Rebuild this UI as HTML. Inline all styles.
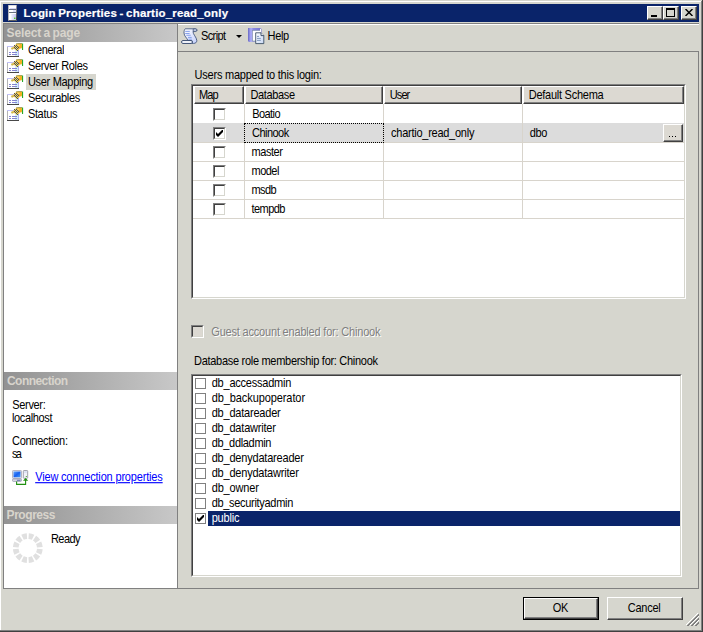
<!DOCTYPE html>
<html><head><meta charset="utf-8"><title>Login Properties - chartio_read_only</title>
<style>
html,body{margin:0;padding:0;background:#d6d6ce;}
body{width:703px;height:632px;overflow:hidden;}
#win{position:relative;width:703px;height:632px;background:#d6d6ce;overflow:hidden;font:11px/13px "Liberation Sans",sans-serif;color:#000;}
#win div,#win span,#win svg{position:absolute;box-sizing:border-box;}
.t{white-space:nowrap;font-size:11px;line-height:13px;transform:scaleY(1.125);transform-origin:0 10px;}
.b{font-weight:bold;font-size:11.5px;word-spacing:-0.8px;transform:none;-webkit-text-stroke:0.2px currentColor;}
.b2{font-size:12px;transform:none;-webkit-text-stroke:0;}
.dis{color:#808080;text-shadow:1px 1px 0 #fff;}
.lnk{color:#0000ff;text-decoration:underline;}
.hdr{left:4px;width:173px;height:18px;background:linear-gradient(90deg,#929292,#c8c8c8);}
.hc{top:86px;height:18px;background:#dcd9d2;border-top:1px solid #fff;border-left:1px solid #fff;border-right:1px solid #404040;border-bottom:1px solid #404040;}
.hc i{position:absolute;left:0;top:0;right:0;bottom:0;border-right:1px solid #808080;border-bottom:1px solid #808080;}
.cb{width:13px;height:13px;background:#fff;border-top:1px solid #808080;border-left:1px solid #808080;border-right:1px solid #fff;border-bottom:1px solid #fff;}
.cb i{position:absolute;left:0;top:0;right:0;bottom:0;border-top:1px solid #404040;border-left:1px solid #404040;border-right:1px solid #d6d6ce;border-bottom:1px solid #d6d6ce;}
.fb{width:11px;height:11px;background:#fff;border:1px solid #808080;left:195px;}
.hl{background:#d6d6ce;}
.gl{background:#d8d4cc;}
.btn{background:#d6d6ce;border-top:1px solid #fff;border-left:1px solid #fff;border-right:1px solid #404040;border-bottom:1px solid #404040;}
.btn i{position:absolute;left:0;top:0;right:0;bottom:0;border-right:1px solid #808080;border-bottom:1px solid #808080;}
.pi{left:7px;width:16px;height:15px;}

</style></head>
<body>
<div id="win">
<!-- window frame -->
<div style="left:0;top:1px;width:701px;height:1px;background:#fff"></div>
<div style="left:0;top:1px;width:1px;height:629px;background:#fff"></div>
<div style="left:701px;top:1px;width:1px;height:630px;background:#808080"></div>
<div style="left:0;top:630px;width:702px;height:1px;background:#808080"></div>
<div style="left:702px;top:0;width:1px;height:632px;background:#404040"></div>
<div style="left:0;top:631px;width:703px;height:1px;background:#404040"></div>
<!-- title bar -->
<div style="left:3px;top:4px;width:696px;height:18px;background:#0a246a"></div>
<svg style="left:8px;top:5px" width="9" height="16" viewBox="0 0 9 16">
 <defs><linearGradient id="tg" x1="0" y1="0" x2="0" y2="1"><stop offset="0" stop-color="#9c9ca8"/><stop offset="1" stop-color="#383838"/></linearGradient>
 <linearGradient id="tl" x1="0" y1="0" x2="1" y2="0"><stop offset="0" stop-color="#ffffff"/><stop offset="0.35" stop-color="#e4e4fa"/><stop offset="1" stop-color="#c4c4ec"/></linearGradient></defs>
 <rect x="0" y="0" width="9" height="16" fill="#fff"/>
 <rect x="0" y="0" width="1" height="16" fill="#b4b4bc"/>
 <rect x="1" y="0" width="7" height="1" fill="#dcdce0"/>
 <rect x="2" y="3" width="6" height="1" fill="#d4d4f4"/>
 <rect x="1" y="4" width="7" height="1" fill="#687080"/>
 <rect x="5" y="5" width="3" height="2" fill="#e0e0f8"/>
 <rect x="1" y="7" width="7" height="1" fill="#687080"/>
 <rect x="2.5" y="9" width="5.5" height="6" fill="url(#tl)"/>
 <rect x="8" y="0" width="1" height="16" fill="url(#tg)"/>
 <rect x="0.5" y="15" width="8.5" height="1" fill="#606060"/>
 <rect x="6" y="12.6" width="1.5" height="1.5" rx="0.5" fill="#50d020"/>
</svg>
<!-- caption buttons -->
<div class="btn" style="left:647px;top:6px;width:16px;height:14px"><i></i></div>
<div style="left:651px;top:15px;width:6px;height:2px;background:#000"></div>
<div class="btn" style="left:663px;top:6px;width:16px;height:14px"><i></i></div>
<div style="left:666px;top:8px;width:9px;height:9px;border:1px solid #000;border-top:2px solid #000"></div>
<div class="btn" style="left:681px;top:6px;width:16px;height:14px"><i></i></div>
<svg style="left:685px;top:9px" width="8" height="7" viewBox="0 0 8 7"><path d="M0.5 0 L7.5 7 M7.5 0 L0.5 7" stroke="#000" stroke-width="1.45" fill="none"/></svg>
<!-- etched line under title -->
<div style="left:3px;top:23px;width:696px;height:1px;background:#808080"></div>
<div style="left:178px;top:24px;width:521px;height:1px;background:#fff"></div>
<!-- left panel -->
<div style="left:3px;top:23px;width:1px;height:566px;background:#808080"></div>
<div style="left:4px;top:24px;width:173px;height:564px;background:#fff"></div>
<div style="left:177px;top:24px;width:1px;height:565px;background:#808080"></div>
<div style="left:3px;top:588px;width:696px;height:1px;background:#808080"></div>
<div style="left:698px;top:51px;width:1px;height:538px;background:#808080"></div>
<div class="hdr" style="top:24px"></div>
<div class="hdr" style="top:372px"></div>
<div class="hdr" style="top:506px"></div>
<div class="hl" style="left:26px;top:74px;width:70px;height:16px"></div>
<svg style="left:7px;top:43px" width="17" height="15" viewBox="0 0 17 15"><rect x="0.5" y="3.5" width="11" height="10" fill="#fff" stroke="none"/><rect x="8" y="7" width="3.5" height="6" fill="#d0ecfa"/><rect x="0" y="3" width="12" height="1" fill="#c0c0f8"/><rect x="0" y="4" width="1" height="10" fill="#b4b4b4"/><rect x="11" y="4" width="1" height="9" fill="#b0b0f0"/><rect x="0" y="13" width="12" height="1" fill="#484848"/><rect x="2" y="9" width="2" height="1" fill="#8484d0"/><rect x="5" y="9" width="5" height="1" fill="#8484d0"/><rect x="2" y="11" width="2" height="1" fill="#8484d0"/><rect x="5" y="11" width="5" height="1" fill="#8484d0"/><path d="M4.3 5.6 L7 3 L9 1.2 L11 0.6 L15 0.6 L15 5.2 L13 5.6 L11.5 7 L10 8.2 L8.5 6.5 L6.5 6 L5 6.6z" fill="#e8c050"/><ellipse cx="12" cy="2.9" rx="3.1" ry="2.3" fill="#f4b020"/><ellipse cx="11.3" cy="2.1" rx="1.6" ry="0.9" fill="#fcd868"/><path d="M9 0.8 L15 0.5" stroke="#90904c" stroke-width="0.8"/><rect x="15" y="0.5" width="1.1" height="6.5" fill="#28a828"/><rect x="7" y="2" width="1" height="1" fill="#44446a"/><rect x="9" y="2" width="1" height="1" fill="#44446a"/><rect x="8" y="3" width="1" height="1" fill="#44446a"/><rect x="10" y="3" width="1" height="1" fill="#44446a"/><rect x="7" y="4" width="1" height="1" fill="#44446a"/><rect x="9" y="4" width="1" height="1" fill="#44446a"/><rect x="11" y="4" width="1" height="1" fill="#44446a"/><rect x="8" y="5" width="1" height="1" fill="#44446a"/><rect x="10" y="5" width="1" height="1" fill="#44446a"/><rect x="9" y="6" width="1" height="1" fill="#44446a"/><rect x="10" y="7" width="1" height="1" fill="#44446a"/><rect x="8" y="2" width="1" height="1" fill="#f8e848"/><rect x="9" y="3" width="1" height="1" fill="#f8e848"/><rect x="8" y="4" width="1" height="1" fill="#f8e848"/><rect x="10" y="4" width="1" height="1" fill="#f8e848"/><rect x="9" y="5" width="1" height="1" fill="#f8e848"/><rect x="10" y="6" width="1" height="1" fill="#f8e848"/><rect x="9" y="7" width="1" height="1" fill="#f8e848"/><rect x="4.3" y="4.5" width="1.8" height="1.8" fill="#c8b84c"/></svg>
<svg style="left:7px;top:59px" width="17" height="15" viewBox="0 0 17 15"><rect x="0.5" y="3.5" width="11" height="10" fill="#fff" stroke="none"/><rect x="8" y="7" width="3.5" height="6" fill="#d0ecfa"/><rect x="0" y="3" width="12" height="1" fill="#c0c0f8"/><rect x="0" y="4" width="1" height="10" fill="#b4b4b4"/><rect x="11" y="4" width="1" height="9" fill="#b0b0f0"/><rect x="0" y="13" width="12" height="1" fill="#484848"/><rect x="2" y="9" width="2" height="1" fill="#8484d0"/><rect x="5" y="9" width="5" height="1" fill="#8484d0"/><rect x="2" y="11" width="2" height="1" fill="#8484d0"/><rect x="5" y="11" width="5" height="1" fill="#8484d0"/><path d="M4.3 5.6 L7 3 L9 1.2 L11 0.6 L15 0.6 L15 5.2 L13 5.6 L11.5 7 L10 8.2 L8.5 6.5 L6.5 6 L5 6.6z" fill="#e8c050"/><ellipse cx="12" cy="2.9" rx="3.1" ry="2.3" fill="#f4b020"/><ellipse cx="11.3" cy="2.1" rx="1.6" ry="0.9" fill="#fcd868"/><path d="M9 0.8 L15 0.5" stroke="#90904c" stroke-width="0.8"/><rect x="15" y="0.5" width="1.1" height="6.5" fill="#28a828"/><rect x="7" y="2" width="1" height="1" fill="#44446a"/><rect x="9" y="2" width="1" height="1" fill="#44446a"/><rect x="8" y="3" width="1" height="1" fill="#44446a"/><rect x="10" y="3" width="1" height="1" fill="#44446a"/><rect x="7" y="4" width="1" height="1" fill="#44446a"/><rect x="9" y="4" width="1" height="1" fill="#44446a"/><rect x="11" y="4" width="1" height="1" fill="#44446a"/><rect x="8" y="5" width="1" height="1" fill="#44446a"/><rect x="10" y="5" width="1" height="1" fill="#44446a"/><rect x="9" y="6" width="1" height="1" fill="#44446a"/><rect x="10" y="7" width="1" height="1" fill="#44446a"/><rect x="8" y="2" width="1" height="1" fill="#f8e848"/><rect x="9" y="3" width="1" height="1" fill="#f8e848"/><rect x="8" y="4" width="1" height="1" fill="#f8e848"/><rect x="10" y="4" width="1" height="1" fill="#f8e848"/><rect x="9" y="5" width="1" height="1" fill="#f8e848"/><rect x="10" y="6" width="1" height="1" fill="#f8e848"/><rect x="9" y="7" width="1" height="1" fill="#f8e848"/><rect x="4.3" y="4.5" width="1.8" height="1.8" fill="#c8b84c"/></svg>
<svg style="left:7px;top:75px" width="17" height="15" viewBox="0 0 17 15"><rect x="0.5" y="3.5" width="11" height="10" fill="#fff" stroke="none"/><rect x="8" y="7" width="3.5" height="6" fill="#d0ecfa"/><rect x="0" y="3" width="12" height="1" fill="#c0c0f8"/><rect x="0" y="4" width="1" height="10" fill="#b4b4b4"/><rect x="11" y="4" width="1" height="9" fill="#b0b0f0"/><rect x="0" y="13" width="12" height="1" fill="#484848"/><rect x="2" y="9" width="2" height="1" fill="#8484d0"/><rect x="5" y="9" width="5" height="1" fill="#8484d0"/><rect x="2" y="11" width="2" height="1" fill="#8484d0"/><rect x="5" y="11" width="5" height="1" fill="#8484d0"/><path d="M4.3 5.6 L7 3 L9 1.2 L11 0.6 L15 0.6 L15 5.2 L13 5.6 L11.5 7 L10 8.2 L8.5 6.5 L6.5 6 L5 6.6z" fill="#e8c050"/><ellipse cx="12" cy="2.9" rx="3.1" ry="2.3" fill="#f4b020"/><ellipse cx="11.3" cy="2.1" rx="1.6" ry="0.9" fill="#fcd868"/><path d="M9 0.8 L15 0.5" stroke="#90904c" stroke-width="0.8"/><rect x="15" y="0.5" width="1.1" height="6.5" fill="#28a828"/><rect x="7" y="2" width="1" height="1" fill="#44446a"/><rect x="9" y="2" width="1" height="1" fill="#44446a"/><rect x="8" y="3" width="1" height="1" fill="#44446a"/><rect x="10" y="3" width="1" height="1" fill="#44446a"/><rect x="7" y="4" width="1" height="1" fill="#44446a"/><rect x="9" y="4" width="1" height="1" fill="#44446a"/><rect x="11" y="4" width="1" height="1" fill="#44446a"/><rect x="8" y="5" width="1" height="1" fill="#44446a"/><rect x="10" y="5" width="1" height="1" fill="#44446a"/><rect x="9" y="6" width="1" height="1" fill="#44446a"/><rect x="10" y="7" width="1" height="1" fill="#44446a"/><rect x="8" y="2" width="1" height="1" fill="#f8e848"/><rect x="9" y="3" width="1" height="1" fill="#f8e848"/><rect x="8" y="4" width="1" height="1" fill="#f8e848"/><rect x="10" y="4" width="1" height="1" fill="#f8e848"/><rect x="9" y="5" width="1" height="1" fill="#f8e848"/><rect x="10" y="6" width="1" height="1" fill="#f8e848"/><rect x="9" y="7" width="1" height="1" fill="#f8e848"/><rect x="4.3" y="4.5" width="1.8" height="1.8" fill="#c8b84c"/></svg>
<svg style="left:7px;top:91px" width="17" height="15" viewBox="0 0 17 15"><rect x="0.5" y="3.5" width="11" height="10" fill="#fff" stroke="none"/><rect x="8" y="7" width="3.5" height="6" fill="#d0ecfa"/><rect x="0" y="3" width="12" height="1" fill="#c0c0f8"/><rect x="0" y="4" width="1" height="10" fill="#b4b4b4"/><rect x="11" y="4" width="1" height="9" fill="#b0b0f0"/><rect x="0" y="13" width="12" height="1" fill="#484848"/><rect x="2" y="9" width="2" height="1" fill="#8484d0"/><rect x="5" y="9" width="5" height="1" fill="#8484d0"/><rect x="2" y="11" width="2" height="1" fill="#8484d0"/><rect x="5" y="11" width="5" height="1" fill="#8484d0"/><path d="M4.3 5.6 L7 3 L9 1.2 L11 0.6 L15 0.6 L15 5.2 L13 5.6 L11.5 7 L10 8.2 L8.5 6.5 L6.5 6 L5 6.6z" fill="#e8c050"/><ellipse cx="12" cy="2.9" rx="3.1" ry="2.3" fill="#f4b020"/><ellipse cx="11.3" cy="2.1" rx="1.6" ry="0.9" fill="#fcd868"/><path d="M9 0.8 L15 0.5" stroke="#90904c" stroke-width="0.8"/><rect x="15" y="0.5" width="1.1" height="6.5" fill="#28a828"/><rect x="7" y="2" width="1" height="1" fill="#44446a"/><rect x="9" y="2" width="1" height="1" fill="#44446a"/><rect x="8" y="3" width="1" height="1" fill="#44446a"/><rect x="10" y="3" width="1" height="1" fill="#44446a"/><rect x="7" y="4" width="1" height="1" fill="#44446a"/><rect x="9" y="4" width="1" height="1" fill="#44446a"/><rect x="11" y="4" width="1" height="1" fill="#44446a"/><rect x="8" y="5" width="1" height="1" fill="#44446a"/><rect x="10" y="5" width="1" height="1" fill="#44446a"/><rect x="9" y="6" width="1" height="1" fill="#44446a"/><rect x="10" y="7" width="1" height="1" fill="#44446a"/><rect x="8" y="2" width="1" height="1" fill="#f8e848"/><rect x="9" y="3" width="1" height="1" fill="#f8e848"/><rect x="8" y="4" width="1" height="1" fill="#f8e848"/><rect x="10" y="4" width="1" height="1" fill="#f8e848"/><rect x="9" y="5" width="1" height="1" fill="#f8e848"/><rect x="10" y="6" width="1" height="1" fill="#f8e848"/><rect x="9" y="7" width="1" height="1" fill="#f8e848"/><rect x="4.3" y="4.5" width="1.8" height="1.8" fill="#c8b84c"/></svg>
<svg style="left:7px;top:107px" width="17" height="15" viewBox="0 0 17 15"><rect x="0.5" y="3.5" width="11" height="10" fill="#fff" stroke="none"/><rect x="8" y="7" width="3.5" height="6" fill="#d0ecfa"/><rect x="0" y="3" width="12" height="1" fill="#c0c0f8"/><rect x="0" y="4" width="1" height="10" fill="#b4b4b4"/><rect x="11" y="4" width="1" height="9" fill="#b0b0f0"/><rect x="0" y="13" width="12" height="1" fill="#484848"/><rect x="2" y="9" width="2" height="1" fill="#8484d0"/><rect x="5" y="9" width="5" height="1" fill="#8484d0"/><rect x="2" y="11" width="2" height="1" fill="#8484d0"/><rect x="5" y="11" width="5" height="1" fill="#8484d0"/><path d="M4.3 5.6 L7 3 L9 1.2 L11 0.6 L15 0.6 L15 5.2 L13 5.6 L11.5 7 L10 8.2 L8.5 6.5 L6.5 6 L5 6.6z" fill="#e8c050"/><ellipse cx="12" cy="2.9" rx="3.1" ry="2.3" fill="#f4b020"/><ellipse cx="11.3" cy="2.1" rx="1.6" ry="0.9" fill="#fcd868"/><path d="M9 0.8 L15 0.5" stroke="#90904c" stroke-width="0.8"/><rect x="15" y="0.5" width="1.1" height="6.5" fill="#28a828"/><rect x="7" y="2" width="1" height="1" fill="#44446a"/><rect x="9" y="2" width="1" height="1" fill="#44446a"/><rect x="8" y="3" width="1" height="1" fill="#44446a"/><rect x="10" y="3" width="1" height="1" fill="#44446a"/><rect x="7" y="4" width="1" height="1" fill="#44446a"/><rect x="9" y="4" width="1" height="1" fill="#44446a"/><rect x="11" y="4" width="1" height="1" fill="#44446a"/><rect x="8" y="5" width="1" height="1" fill="#44446a"/><rect x="10" y="5" width="1" height="1" fill="#44446a"/><rect x="9" y="6" width="1" height="1" fill="#44446a"/><rect x="10" y="7" width="1" height="1" fill="#44446a"/><rect x="8" y="2" width="1" height="1" fill="#f8e848"/><rect x="9" y="3" width="1" height="1" fill="#f8e848"/><rect x="8" y="4" width="1" height="1" fill="#f8e848"/><rect x="10" y="4" width="1" height="1" fill="#f8e848"/><rect x="9" y="5" width="1" height="1" fill="#f8e848"/><rect x="10" y="6" width="1" height="1" fill="#f8e848"/><rect x="9" y="7" width="1" height="1" fill="#f8e848"/><rect x="4.3" y="4.5" width="1.8" height="1.8" fill="#c8b84c"/></svg>
<!-- toolbar -->
<div style="left:178px;top:51px;width:521px;height:1px;background:#808080"></div>
<svg style="left:181px;top:28px" width="17" height="17" viewBox="0 0 17 17"><defs><linearGradient id="sg" x1="0" y1="0" x2="1" y2="1"><stop offset="0" stop-color="#ffffff"/><stop offset="1" stop-color="#c4d0fc"/></linearGradient></defs><path d="M4.2 0.8 L14.5 0.8 C16.6 0.8 16.6 3.4 14.5 3.4 L12 3.4 C11.6 6 15.8 9.5 15.8 12.5 C15.8 14.5 14.5 15.4 12.5 15.4 L11 15.4 L11 12.6 L7 12.6 C6 10 3 8 3 5 C3 3 3.4 1.6 4.2 0.8z" fill="url(#sg)" stroke="#3c5078" stroke-width="0.85"/><path d="M12.2 1 L14.6 1 C16 1 16 3.2 14.6 3.2 L12.2 3.2z" fill="#dfe6ff" stroke="#34486c" stroke-width="0.7"/><rect x="0.6" y="12.6" width="10.8" height="2.8" rx="1.3" fill="#eef2ff" stroke="#34486c" stroke-width="1"/><rect x="1.6" y="13.5" width="8.6" height="1" fill="#fff"/><rect x="4.2" y="2.9" width="4.6" height="0.9" fill="#7c98e8"/><rect x="4.2" y="5.0" width="4.4" height="0.9" fill="#7c98e8"/><rect x="5.3" y="6.8" width="4.4" height="0.9" fill="#7c98e8"/><rect x="7.0" y="8.9" width="3.7" height="0.9" fill="#7c98e8"/><rect x="7.4" y="10.7" width="3.4" height="0.9" fill="#7c98e8"/></svg>
<svg style="left:248px;top:28px" width="17" height="17" viewBox="0 0 17 17"><defs><linearGradient id="bg1" x1="0" y1="0" x2="1" y2="0"><stop offset="0" stop-color="#6868c4"/><stop offset="0.22" stop-color="#b0b0fa"/><stop offset="0.4" stop-color="#8c8ce0"/><stop offset="1" stop-color="#7474d0"/></linearGradient><linearGradient id="dg" x1="0" y1="0" x2="1" y2="1"><stop offset="0" stop-color="#ffffff"/><stop offset="1" stop-color="#c8d8f4"/></linearGradient></defs><path d="M0 0 L12.5 0 L13.5 1 L13.5 13 L1 14 L0 13z" fill="url(#bg1)"/><rect x="4.5" y="2.5" width="8" height="10.5" fill="#fff" stroke="#8090a8" stroke-width="0.6"/><rect x="12" y="0.8" width="1" height="4.5" fill="#fff"/><path d="M7.7 4.8 L13 4.8 L15.8 7.6 L15.8 15.6 L7.7 15.6z" fill="url(#dg)" stroke="#34485f" stroke-width="0.85"/><path d="M13 4.8 L13 7.6 L15.8 7.6" fill="#fff" stroke="#30445c" stroke-width="0.9"/><rect x="9.0" y="7.9" width="2.0" height="0.9" fill="#7890b8"/><rect x="9.0" y="9.9" width="3.8" height="0.9" fill="#7890b8"/><rect x="9.0" y="11.9" width="3.8" height="0.9" fill="#7890b8"/></svg>
<div style="left:236px;top:35px;width:0;height:0;border-left:3px solid transparent;border-right:3px solid transparent;border-top:3px solid #000"></div>
<!-- grid -->
<div style="left:191px;top:84px;width:495px;height:215px;background:#fff;border-top:1px solid #808080;border-left:1px solid #808080;border-right:1px solid #fff;border-bottom:1px solid #fff"></div>
<div style="left:192px;top:85px;width:493px;height:213px;border-top:1px solid #404040;border-left:1px solid #404040;border-right:1px solid #d6d6ce;border-bottom:1px solid #d6d6ce"></div>
<div class="hc" style="left:194px;width:50px"><i></i></div>
<div class="hc" style="left:245px;width:138px"><i></i></div>
<div class="hc" style="left:384px;width:138px"><i></i></div>
<div class="hc" style="left:523px;width:161px"><i></i></div>
<!-- selected row -->
<div style="left:193px;top:123px;width:491px;height:20px;background:#dcdcdc"></div>
<!-- grid lines -->
<div class="gl" style="left:193px;top:142px;width:491px;height:1px"></div>
<div class="gl" style="left:193px;top:161px;width:491px;height:1px"></div>
<div class="gl" style="left:193px;top:180px;width:491px;height:1px"></div>
<div class="gl" style="left:193px;top:199px;width:491px;height:1px"></div>
<div class="gl" style="left:193px;top:218px;width:491px;height:1px"></div>
<div class="gl" style="left:244px;top:104px;width:1px;height:115px"></div>
<div class="gl" style="left:383px;top:104px;width:1px;height:115px"></div>
<div class="gl" style="left:522px;top:104px;width:1px;height:115px"></div>
<!-- focus rect -->
<div style="left:244px;top:123px;width:140px;height:20px;border:1px dotted #000"></div>
<!-- checkboxes -->
<div class="cb" style="left:213px;top:108px"><i></i></div>
<div class="cb" style="left:213px;top:127px"><i></i></div>
<div class="cb" style="left:213px;top:146px"><i></i></div>
<div class="cb" style="left:213px;top:165px"><i></i></div>
<div class="cb" style="left:213px;top:184px"><i></i></div>
<div class="cb" style="left:213px;top:203px"><i></i></div>
<svg style="left:216px;top:130px" width="7" height="7" viewBox="0 0 7 7"><path d="M0 2v3l2 2 5-5V-1L2 4z" fill="#000"/></svg>
<!-- ... button -->
<div class="btn" style="left:663px;top:124px;width:20px;height:18px;background:#dcd9d2"><i></i></div>
<div style="left:669px;top:136px;width:1px;height:1px;background:#000"></div>
<div style="left:672px;top:136px;width:1px;height:1px;background:#000"></div>
<div style="left:675px;top:136px;width:1px;height:1px;background:#000"></div>
<!-- guest checkbox -->
<div class="cb" style="left:191px;top:325px;background:#dcd9d2"><i></i></div>
<!-- role list -->
<div style="left:191px;top:374px;width:491px;height:203px;background:#fff;border-top:1px solid #808080;border-left:1px solid #808080;border-right:1px solid #fff;border-bottom:1px solid #fff"></div>
<div style="left:192px;top:375px;width:489px;height:201px;border-top:1px solid #404040;border-left:1px solid #404040;border-right:1px solid #d6d6ce;border-bottom:1px solid #d6d6ce"></div>
<div style="left:208px;top:511px;width:472px;height:15px;background:#0a246a"></div>
<div class="fb" style="top:378px"></div>
<div class="fb" style="top:393px"></div>
<div class="fb" style="top:408px"></div>
<div class="fb" style="top:423px"></div>
<div class="fb" style="top:438px"></div>
<div class="fb" style="top:453px"></div>
<div class="fb" style="top:468px"></div>
<div class="fb" style="top:483px"></div>
<div class="fb" style="top:498px"></div>
<div class="fb" style="top:513px"></div>
<svg style="left:197px;top:515px" width="7" height="7" viewBox="0 0 7 7"><path d="M0 2v3l2 2 5-5V-1L2 4z" fill="#000"/></svg>
<!-- connection icon -->
<svg style="left:12px;top:470px" width="17" height="16" viewBox="0 0 17 16"><defs><linearGradient id="mg" x1="0" y1="0" x2="1" y2="1"><stop offset="0" stop-color="#60a8ff"/><stop offset="0.5" stop-color="#1860f0"/><stop offset="1" stop-color="#48a0f8"/></linearGradient></defs><rect x="0.5" y="0.5" width="9" height="8" rx="0.8" fill="#e4e4ec" stroke="#a8a8b8" stroke-width="0.8"/><rect x="1.5" y="1.5" width="7" height="5.8" fill="url(#mg)"/><rect x="0.5" y="9" width="9" height="2.4" rx="0.8" fill="#dcdce8" stroke="#9090a8" stroke-width="0.7"/><rect x="5" y="9.8" width="3.5" height="1" fill="#6870b0"/><rect x="11.3" y="0.5" width="4.4" height="7.8" rx="0.8" fill="#f0f0f8" stroke="#8c8c98" stroke-width="0.8"/><rect x="12.2" y="1.6" width="2.6" height="0.8" fill="#b8c8e8"/><rect x="13.8" y="6" width="1" height="1" fill="#40b020"/><path d="M4.6 11.5 L4.6 14.4 L13.6 14.4 L13.6 9.2" fill="none" stroke="#209010" stroke-width="1.1"/><path d="M11 10.8 L13.6 8 L16.2 10.8z" fill="#209010"/></svg>
<!-- spinner -->
<svg style="left:12px;top:532px" width="32" height="32" viewBox="0 0 32 32"><path d="M16.84 1.24 A14.9 14.9 0 0 1 22.33 2.71 L19.83 7.83 A9.2 9.2 0 0 0 16.44 6.92 Z" fill="#e0e0e0"/><path d="M24.13 3.75 A14.9 14.9 0 0 1 28.15 7.77 L23.43 10.96 A9.2 9.2 0 0 0 20.94 8.47 Z" fill="#e0e0e0"/><path d="M29.19 9.57 A14.9 14.9 0 0 1 30.66 15.06 L24.98 15.46 A9.2 9.2 0 0 0 24.07 12.07 Z" fill="#e0e0e0"/><path d="M30.66 17.14 A14.9 14.9 0 0 1 29.19 22.63 L24.07 20.13 A9.2 9.2 0 0 0 24.98 16.74 Z" fill="#e0e0e0"/><path d="M28.15 24.43 A14.9 14.9 0 0 1 24.13 28.45 L20.94 23.73 A9.2 9.2 0 0 0 23.43 21.24 Z" fill="#e0e0e0"/><path d="M22.33 29.49 A14.9 14.9 0 0 1 16.84 30.96 L16.44 25.28 A9.2 9.2 0 0 0 19.83 24.37 Z" fill="#e0e0e0"/><path d="M14.76 30.96 A14.9 14.9 0 0 1 9.27 29.49 L11.77 24.37 A9.2 9.2 0 0 0 15.16 25.28 Z" fill="#e0e0e0"/><path d="M7.47 28.45 A14.9 14.9 0 0 1 3.45 24.43 L8.17 21.24 A9.2 9.2 0 0 0 10.66 23.73 Z" fill="#e0e0e0"/><path d="M2.41 22.63 A14.9 14.9 0 0 1 0.94 17.14 L6.62 16.74 A9.2 9.2 0 0 0 7.53 20.13 Z" fill="#e0e0e0"/><path d="M0.94 15.06 A14.9 14.9 0 0 1 2.41 9.57 L7.53 12.07 A9.2 9.2 0 0 0 6.62 15.46 Z" fill="#e0e0e0"/><path d="M3.45 7.77 A14.9 14.9 0 0 1 7.47 3.75 L10.66 8.47 A9.2 9.2 0 0 0 8.17 10.96 Z" fill="#e0e0e0"/><path d="M9.27 2.71 A14.9 14.9 0 0 1 14.76 1.24 L15.16 6.92 A9.2 9.2 0 0 0 11.77 7.83 Z" fill="#e0e0e0"/></svg>
<!-- buttons -->
<div style="left:523px;top:597px;width:76px;height:23px;background:#000"></div>
<div class="btn" style="left:524px;top:598px;width:74px;height:21px"><i></i></div>
<div class="btn" style="left:607px;top:597px;width:76px;height:23px"><i></i></div>
<!-- grip -->
<svg style="left:686px;top:613px" width="13" height="13" viewBox="0 0 13 13">
 <path d="M0 13L13 0M4 13L13 4M8 13L13 8" stroke="#fff" stroke-width="1" transform="translate(0,-1)"/>
 <path d="M1 13L13 1M2 13L13 2M5 13L13 5M6 13L13 6M9 13L13 9M10 13L13 10" stroke="#808080" stroke-width="1"/>
</svg>

<span class="t b" style="left:23.5px;top:7px;letter-spacing:0.18px;color:#fff">Login Properties - chartio_read_only</span>
<span class="t b b2" style="left:6.5px;top:27px;letter-spacing:-0.12px;color:#d8d4cc">Select a page</span>
<span class="t b b2" style="left:7.0px;top:375px;letter-spacing:-0.55px;color:#d8d4cc">Connection</span>
<span class="t b b2" style="left:6.6px;top:509px;letter-spacing:-0.45px;color:#d8d4cc">Progress</span>
<span class="t" style="left:28.0px;top:44px;letter-spacing:-0.45px;">General</span>
<span class="t" style="left:27.9px;top:60px;letter-spacing:-0.31px;">Server Roles</span>
<span class="t" style="left:27.9px;top:76px;letter-spacing:-0.30px;">User Mapping</span>
<span class="t" style="left:27.9px;top:92px;letter-spacing:-0.30px;">Securables</span>
<span class="t" style="left:27.9px;top:108px;letter-spacing:-0.33px;">Status</span>
<span class="t" style="left:201.0px;top:30px;letter-spacing:-0.61px;">Script</span>
<span class="t" style="left:267.6px;top:30px;letter-spacing:-0.38px;">Help</span>
<span class="t" style="left:194.6px;top:69px;letter-spacing:-0.23px;">Users mapped to this login:</span>
<span class="t" style="left:199.0px;top:89px;letter-spacing:-0.87px;">Map</span>
<span class="t" style="left:250.5px;top:89px;letter-spacing:-0.35px;">Database</span>
<span class="t" style="left:389.8px;top:89px;letter-spacing:-0.93px;">User</span>
<span class="t" style="left:528.7px;top:89px;letter-spacing:-0.25px;">Default Schema</span>
<span class="t" style="left:252.3px;top:108px;letter-spacing:-0.59px;">Boatio</span>
<span class="t" style="left:252.0px;top:127px;letter-spacing:-0.53px;">Chinook</span>
<span class="t" style="left:251.5px;top:146px;letter-spacing:-0.44px;">master</span>
<span class="t" style="left:251.5px;top:165px;letter-spacing:-0.51px;">model</span>
<span class="t" style="left:251.5px;top:184px;letter-spacing:-0.58px;">msdb</span>
<span class="t" style="left:251.5px;top:203px;letter-spacing:-0.54px;">tempdb</span>
<span class="t" style="left:391.1px;top:127px;letter-spacing:-0.26px;">chartio_read_only</span>
<span class="t" style="left:529.8px;top:127px;letter-spacing:-0.39px;">dbo</span>
<span class="t dis" style="left:211.3px;top:326px;letter-spacing:-0.19px;">Guest account enabled for: Chinook</span>
<span class="t" style="left:194.0px;top:355px;letter-spacing:-0.29px;">Database role membership for: Chinook</span>
<span class="t" style="left:211.7px;top:377px;letter-spacing:-0.22px;">db_accessadmin</span>
<span class="t" style="left:211.7px;top:392px;letter-spacing:-0.09px;">db_backupoperator</span>
<span class="t" style="left:211.7px;top:407px;letter-spacing:-0.21px;">db_datareader</span>
<span class="t" style="left:211.7px;top:422px;letter-spacing:-0.20px;">db_datawriter</span>
<span class="t" style="left:211.7px;top:437px;letter-spacing:-0.32px;">db_ddladmin</span>
<span class="t" style="left:211.7px;top:452px;letter-spacing:-0.20px;">db_denydatareader</span>
<span class="t" style="left:211.7px;top:467px;letter-spacing:-0.21px;">db_denydatawriter</span>
<span class="t" style="left:211.7px;top:482px;letter-spacing:-0.17px;">db_owner</span>
<span class="t" style="left:211.7px;top:497px;letter-spacing:-0.31px;">db_securityadmin</span>
<span class="t" style="left:211.7px;top:512px;letter-spacing:-0.21px;color:#fff">public</span>
<span class="t" style="left:12.2px;top:399px;letter-spacing:-0.31px;">Server:</span>
<span class="t" style="left:12.0px;top:412px;letter-spacing:-0.37px;">localhost</span>
<span class="t" style="left:12.0px;top:435px;letter-spacing:-0.27px;">Connection:</span>
<span class="t" style="left:12.0px;top:448px;letter-spacing:-1.76px;">sa</span>
<span class="t lnk" style="left:35.2px;top:471px;letter-spacing:-0.17px;">View connection properties</span>
<span class="t" style="left:50.9px;top:533px;letter-spacing:-0.52px;">Ready</span>
<span class="t" style="left:552.7px;top:602px;letter-spacing:-0.15px;">OK</span>
<span class="t" style="left:627.8px;top:602px;letter-spacing:-0.27px;">Cancel</span>
</div>
</body></html>
